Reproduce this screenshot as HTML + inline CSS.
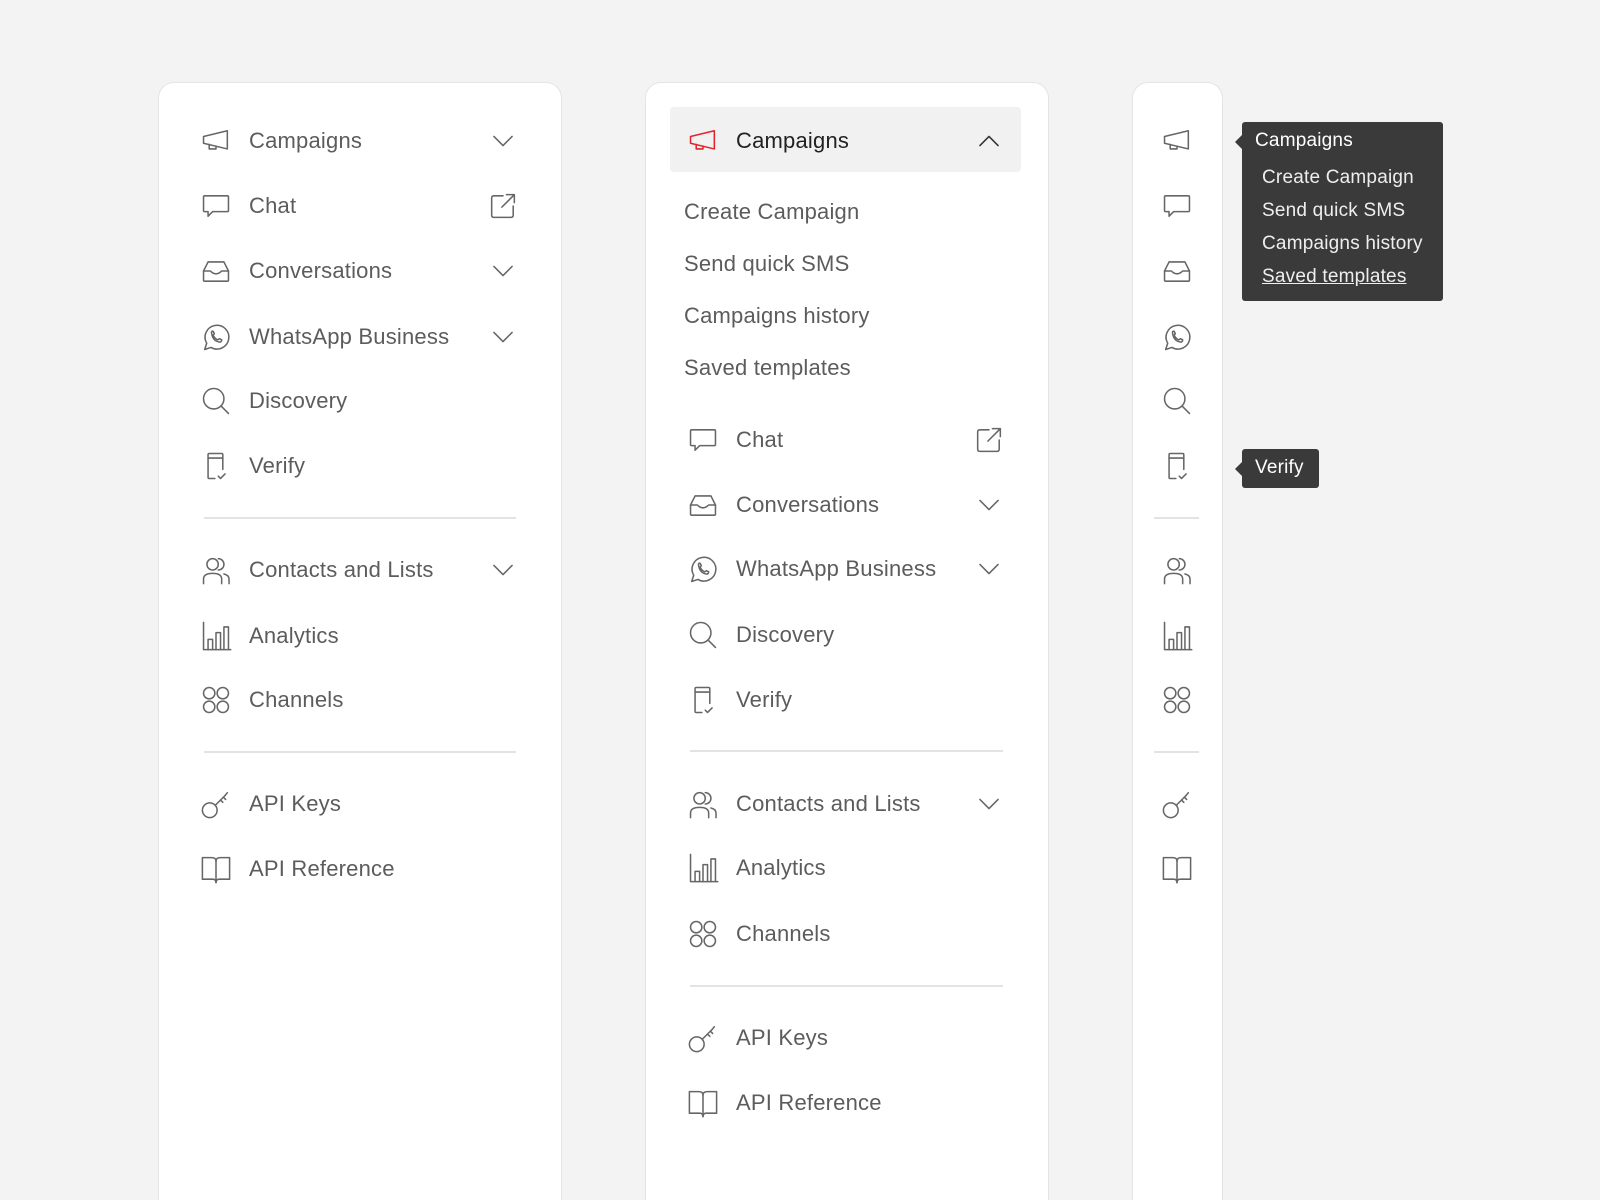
<!DOCTYPE html>
<html><head><meta charset="utf-8"><style>
*{margin:0;padding:0;box-sizing:border-box}
html,body{width:1600px;height:1200px;overflow:hidden;background:#f3f3f3}
#w{width:1600px;height:1200px;position:relative;overflow:hidden;background:#f3f3f3;font-family:"Liberation Sans",sans-serif;color:#5c5c5c}
.panel{position:absolute;top:82px;height:1118px;background:#fff;border:1.5px solid #e4e4e4;border-bottom:0;border-radius:16px 16px 0 0}
.it{position:absolute;font-size:22px;line-height:28px;white-space:nowrap;letter-spacing:0.2px}
.ic{position:absolute;width:30px;height:30px}
.ic svg{position:absolute;left:-2px;top:-2px;width:34px;height:34px;fill:none;stroke:#666;stroke-width:1.35;stroke-linecap:round;stroke-linejoin:round}
.hr{position:absolute;height:2px;background:#e3e3e3}
.tip{position:absolute;background:#3a3a3a;color:#fff;border-radius:3px}
.tip:before{content:"";position:absolute;left:-7px;top:13px;border:7px solid transparent;border-left:0;border-right-color:#3a3a3a}
.ts{position:absolute;font-size:19px;color:#eee;white-space:nowrap;letter-spacing:0.2px}
</style></head><body><div id="w">
<svg width="0" height="0" style="position:absolute">
<defs>
<g id="camp"><path d="M4 11 L25 6 V22 L4 17 Z"/><path d="M9 18 V22 H15 V19.5"/></g>
<g id="chat"><path d="M5 6 H25 Q26 6 26 7 V19 Q26 20 25 20 H12 L8 24 V20 H5 Q4 20 4 19 V7 Q4 6 5 6Z"/></g>
<g id="inbox"><path d="M4 15 L8 7 H22 L26 15 V23 Q26 24 25 24 H5 Q4 24 4 23 Z"/><path d="M4 15 H10 Q15 20 20 15 H26"/></g>
<g id="wa"><path d="M5 26 L6.8 20.5 A10.5 10.5 0 1 1 10.5 24.2 Z"/><path d="M11 11 Q11 9.5 12.5 10 L13.5 12 L12.5 13.5 Q14 16.5 16.5 17.5 L18 16.5 L20 17.5 Q20 19 18.5 19.5 Q12 19 11 11Z"/></g>
<g id="search"><circle cx="13" cy="13" r="9"/><path d="M19.5 19.5 L26 26"/></g>
<g id="verify"><path d="M14 26 H9 Q8 26 8 25 V5 Q8 4 9 4 H20 Q21 4 21 5 V18"/><path d="M8 8 H21"/><path d="M17 24 L19 26 L23 22"/></g>
<g id="contacts"><circle cx="12" cy="10" r="5"/><path d="M4 27 V23 Q4 18 12 18 Q20 18 20 23 V27"/><path d="M17 5 A5 5 0 0 1 17 15"/><path d="M22 18.5 Q26.5 19.5 26.5 23 V27"/></g>
<g id="chart"><path d="M4 3 V27 H28"/><path d="M8 27 V18 H12 V27"/><path d="M15 27 V12 H19 V27"/><path d="M22 27 V7 H26 V27"/></g>
<g id="chan"><circle cx="9" cy="9" r="5"/><circle cx="21" cy="9" r="5"/><circle cx="9" cy="21" r="5"/><circle cx="21" cy="21" r="5"/></g>
<g id="key"><circle cx="9.5" cy="20.5" r="6.5"/><path d="M14.5 16 L23 7.5"/><path d="M19 11.5 L21 13.5 M21.5 9 L23.5 11 M23 7.5 L25 5"/></g>
<g id="book"><path d="M3 5 H11 Q15 5 15 8 Q15 5 19 5 H27 V24 H18 Q15 24 15 27 Q15 24 12 24 H3 Z"/><path d="M15 8 V27"/></g>
<g id="down"><path d="M7 11 L15 19 L23 11"/></g>
<g id="up"><path d="M7 19 L15 11 L23 19"/></g>
<g id="ext"><path d="M15 6 H7 Q5 6 5 8 V23 Q5 25 7 25 H22 Q24 25 24 23 V15"/><path d="M14 16 L25 5 M18 5 H25 V12"/></g>
</defs></svg>

<!-- Panel 1 -->
<div class="panel" style="left:158px;width:404px"></div>
<div class="ic" style="left:201px;top:126px"><svg viewBox="0 0 30 30"><use href="#camp"/></svg></div><div class="it" style="left:249px;top:127px">Campaigns</div><div class="ic" style="left:488px;top:126px"><svg viewBox="0 0 30 30"><use href="#down"/></svg></div>
<div class="ic" style="left:201px;top:191px"><svg viewBox="0 0 30 30"><use href="#chat"/></svg></div><div class="it" style="left:249px;top:192px">Chat</div><div class="ic" style="left:488px;top:191px"><svg viewBox="0 0 30 30"><use href="#ext"/></svg></div>
<div class="ic" style="left:201px;top:256px"><svg viewBox="0 0 30 30"><use href="#inbox"/></svg></div><div class="it" style="left:249px;top:257px">Conversations</div><div class="ic" style="left:488px;top:256px"><svg viewBox="0 0 30 30"><use href="#down"/></svg></div>
<div class="ic" style="left:201px;top:322px"><svg viewBox="0 0 30 30"><use href="#wa"/></svg></div><div class="it" style="left:249px;top:323px">WhatsApp Business</div><div class="ic" style="left:488px;top:322px"><svg viewBox="0 0 30 30"><use href="#down"/></svg></div>
<div class="ic" style="left:201px;top:386px"><svg viewBox="0 0 30 30"><use href="#search"/></svg></div><div class="it" style="left:249px;top:387px">Discovery</div>
<div class="ic" style="left:201px;top:451px"><svg viewBox="0 0 30 30"><use href="#verify"/></svg></div><div class="it" style="left:249px;top:452px">Verify</div>
<div class="hr" style="left:204px;width:312px;top:517px"></div>
<div class="ic" style="left:201px;top:555px"><svg viewBox="0 0 30 30"><use href="#contacts"/></svg></div><div class="it" style="left:249px;top:556px">Contacts and Lists</div><div class="ic" style="left:488px;top:555px"><svg viewBox="0 0 30 30"><use href="#down"/></svg></div>
<div class="ic" style="left:201px;top:621px"><svg viewBox="0 0 30 30"><use href="#chart"/></svg></div><div class="it" style="left:249px;top:622px">Analytics</div>
<div class="ic" style="left:201px;top:685px"><svg viewBox="0 0 30 30"><use href="#chan"/></svg></div><div class="it" style="left:249px;top:686px">Channels</div>
<div class="hr" style="left:204px;width:312px;top:751px"></div>
<div class="ic" style="left:201px;top:789px"><svg viewBox="0 0 30 30"><use href="#key"/></svg></div><div class="it" style="left:249px;top:790px">API Keys</div>
<div class="ic" style="left:201px;top:854px"><svg viewBox="0 0 30 30"><use href="#book"/></svg></div><div class="it" style="left:249px;top:855px">API Reference</div>

<!-- Panel 2 -->
<div class="panel" style="left:645px;width:404px"></div>
<div style="position:absolute;left:670px;top:107px;width:351px;height:65px;background:#f1f1f1;border-radius:4px"></div>
<div class="ic" style="left:688px;top:126px"><svg viewBox="0 0 30 30" style="stroke:#e3242b"><use href="#camp"/></svg></div><div class="it" style="left:736px;top:127px;color:#222">Campaigns</div><div class="ic" style="left:974px;top:126px"><svg viewBox="0 0 30 30" style="stroke:#333"><use href="#up"/></svg></div>
<div class="it" style="left:684px;top:198px">Create Campaign</div>
<div class="it" style="left:684px;top:250px">Send quick SMS</div>
<div class="it" style="left:684px;top:302px">Campaigns history</div>
<div class="it" style="left:684px;top:354px">Saved templates</div>
<div class="ic" style="left:688px;top:425px"><svg viewBox="0 0 30 30"><use href="#chat"/></svg></div><div class="it" style="left:736px;top:426px">Chat</div><div class="ic" style="left:974px;top:425px"><svg viewBox="0 0 30 30"><use href="#ext"/></svg></div>
<div class="ic" style="left:688px;top:490px"><svg viewBox="0 0 30 30"><use href="#inbox"/></svg></div><div class="it" style="left:736px;top:491px">Conversations</div><div class="ic" style="left:974px;top:490px"><svg viewBox="0 0 30 30"><use href="#down"/></svg></div>
<div class="ic" style="left:688px;top:554px"><svg viewBox="0 0 30 30"><use href="#wa"/></svg></div><div class="it" style="left:736px;top:555px">WhatsApp Business</div><div class="ic" style="left:974px;top:554px"><svg viewBox="0 0 30 30"><use href="#down"/></svg></div>
<div class="ic" style="left:688px;top:620px"><svg viewBox="0 0 30 30"><use href="#search"/></svg></div><div class="it" style="left:736px;top:621px">Discovery</div>
<div class="ic" style="left:688px;top:685px"><svg viewBox="0 0 30 30"><use href="#verify"/></svg></div><div class="it" style="left:736px;top:686px">Verify</div>
<div class="hr" style="left:690px;width:313px;top:750px"></div>
<div class="ic" style="left:688px;top:789px"><svg viewBox="0 0 30 30"><use href="#contacts"/></svg></div><div class="it" style="left:736px;top:790px">Contacts and Lists</div><div class="ic" style="left:974px;top:789px"><svg viewBox="0 0 30 30"><use href="#down"/></svg></div>
<div class="ic" style="left:688px;top:853px"><svg viewBox="0 0 30 30"><use href="#chart"/></svg></div><div class="it" style="left:736px;top:854px">Analytics</div>
<div class="ic" style="left:688px;top:919px"><svg viewBox="0 0 30 30"><use href="#chan"/></svg></div><div class="it" style="left:736px;top:920px">Channels</div>
<div class="hr" style="left:690px;width:313px;top:985px"></div>
<div class="ic" style="left:688px;top:1023px"><svg viewBox="0 0 30 30"><use href="#key"/></svg></div><div class="it" style="left:736px;top:1024px">API Keys</div>
<div class="ic" style="left:688px;top:1088px"><svg viewBox="0 0 30 30"><use href="#book"/></svg></div><div class="it" style="left:736px;top:1089px">API Reference</div>

<!-- Panel 3 -->
<div class="panel" style="left:1132px;width:91px"></div>
<div class="ic" style="left:1162px;top:126px"><svg viewBox="0 0 30 30"><use href="#camp"/></svg></div>
<div class="ic" style="left:1162px;top:191px"><svg viewBox="0 0 30 30"><use href="#chat"/></svg></div>
<div class="ic" style="left:1162px;top:256px"><svg viewBox="0 0 30 30"><use href="#inbox"/></svg></div>
<div class="ic" style="left:1162px;top:322px"><svg viewBox="0 0 30 30"><use href="#wa"/></svg></div>
<div class="ic" style="left:1162px;top:386px"><svg viewBox="0 0 30 30"><use href="#search"/></svg></div>
<div class="ic" style="left:1162px;top:451px"><svg viewBox="0 0 30 30"><use href="#verify"/></svg></div>
<div class="hr" style="left:1154px;width:45px;top:517px"></div>
<div class="ic" style="left:1162px;top:555px"><svg viewBox="0 0 30 30"><use href="#contacts"/></svg></div>
<div class="ic" style="left:1162px;top:621px"><svg viewBox="0 0 30 30"><use href="#chart"/></svg></div>
<div class="ic" style="left:1162px;top:685px"><svg viewBox="0 0 30 30"><use href="#chan"/></svg></div>
<div class="hr" style="left:1154px;width:45px;top:751px"></div>
<div class="ic" style="left:1162px;top:789px"><svg viewBox="0 0 30 30"><use href="#key"/></svg></div>
<div class="ic" style="left:1162px;top:854px"><svg viewBox="0 0 30 30"><use href="#book"/></svg></div>

<div class="tip" style="left:1242px;top:122px;width:201px;height:179px">
<div class="ts" style="left:13px;top:8px;color:#fff">Campaigns</div>
<div class="ts" style="left:20px;top:45px">Create Campaign</div>
<div class="ts" style="left:20px;top:78px">Send quick SMS</div>
<div class="ts" style="left:20px;top:111px">Campaigns history</div>
<div class="ts" style="left:20px;top:144px;text-decoration:underline">Saved templates</div>
</div>
<div class="tip" style="left:1242px;top:449px;width:77px;height:39px">
<div class="ts" style="left:13px;top:8px;color:#fff">Verify</div>
</div>
</div></body></html>
